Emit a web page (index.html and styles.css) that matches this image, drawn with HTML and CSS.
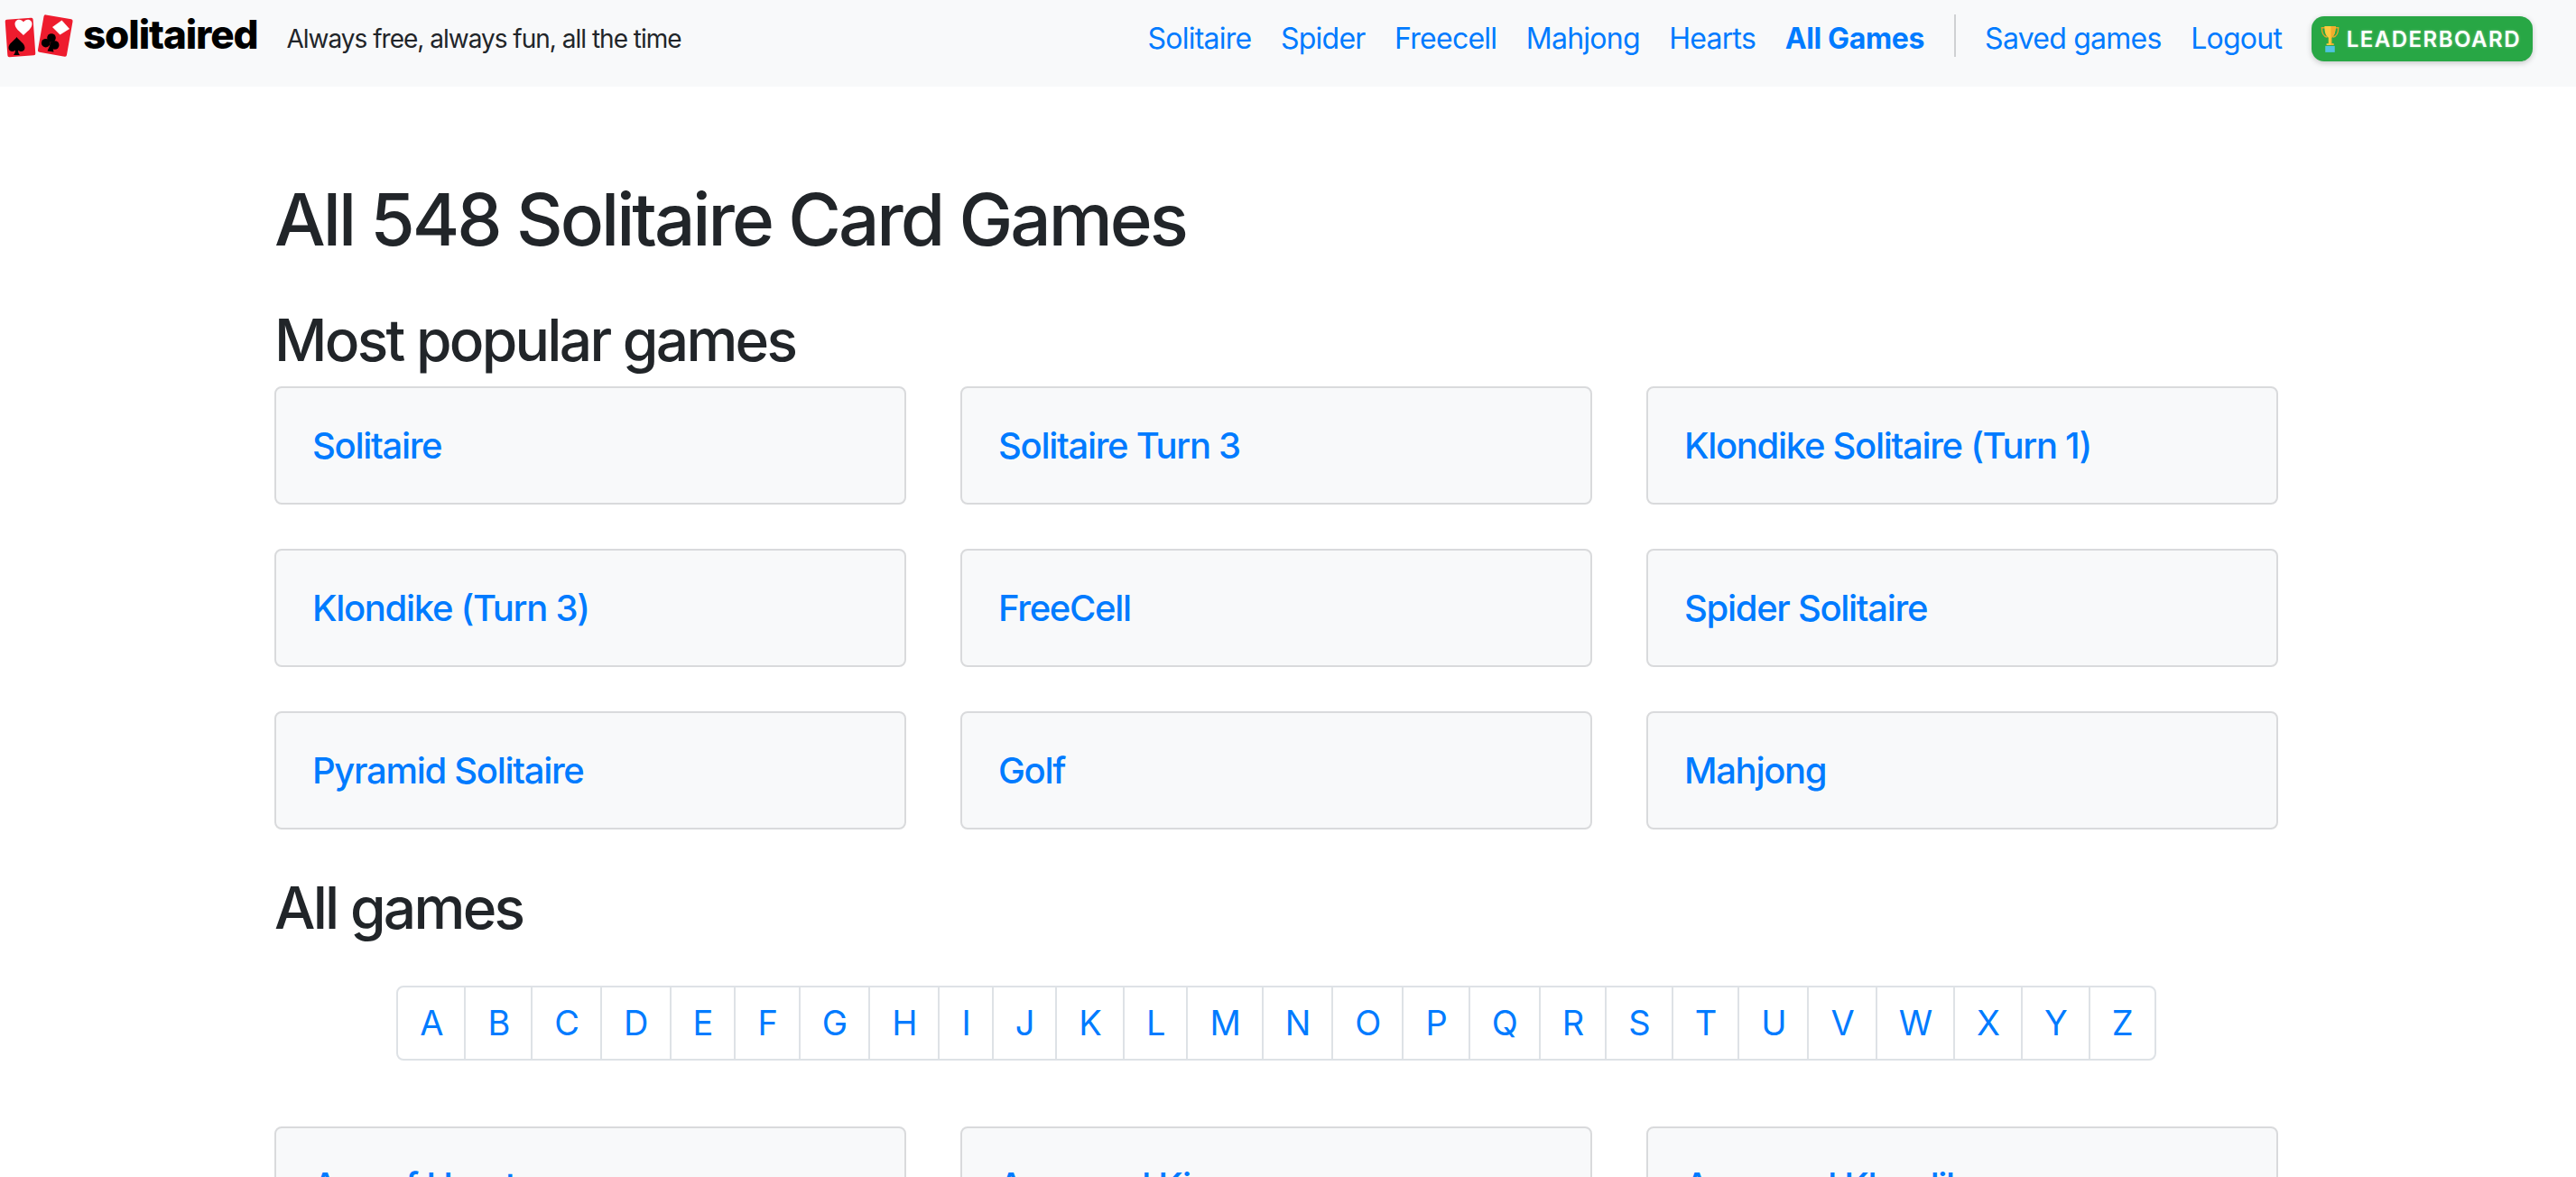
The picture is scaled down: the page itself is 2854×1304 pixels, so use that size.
FILE: index.html
```html
<!DOCTYPE html>
<html>
<head>
    <title>All Solitaire Card Games</title>
    <link rel="stylesheet" href="styles.css">
</head>
<body>
    <nav class="navbar">
        <a class="brand" href="#">
            <svg class="brand-cards" viewBox="0 0 84 96" width="84" height="96">
                <rect x="7" y="20.700" width="31" height="41.600" rx="2" fill="#ee1c2e" transform="rotate(-4 22.500 41.500)"/>
                <path d="M26 39C22 35 16.500 31.500 16.500 26.500 16.500 21 23.500 20 26 24.500 28.500 20 35.500 21 35.500 26.500 35.500 31.500 30 35 26 39Z" fill="#fff"/>
                <path d="M18.500 41C21 45 27.500 48 27.500 53 27.500 57.500 22 58 20 55.500 20 58 20.800 60 22 61H15C16.200 60 17 58 17 55.500 15 58 9.500 57.500 9.500 53 9.500 48 16 45 18.500 41Z" fill="#000"/>
                <rect x="45" y="18.500" width="32.500" height="42" rx="2" fill="#ee1c2e" transform="rotate(10 61 39.500)"/>
                <path d="M68.500 22.500L77 32 66.500 38.500 58 30Z" fill="#fff"/>
                <circle cx="57" cy="42" r="4.800" fill="#000"/>
                <circle cx="50.700" cy="47.700" r="4.800" fill="#000"/>
                <circle cx="60.700" cy="50" r="4.800" fill="#000"/>
                <path d="M56 44L58 51 59.500 57.500 52.500 56.500 55 51Z" fill="#000"/>
            </svg>
            <span class="brand-name">solitaired</span>
        </a>
        <span class="tagline">Always free, always fun, all the time</span>
        <div class="nav-links">
            <a href="#">Solitaire</a>
            <a href="#">Spider</a>
            <a href="#">Freecell</a>
            <a href="#">Mahjong</a>
            <a href="#">Hearts</a>
            <a href="#" class="active">All Games</a>
            <span class="nav-sep"></span>
            <a href="#">Saved games</a>
            <a href="#">Logout</a>
            <a href="#" class="leaderboard">
                <svg viewBox="0 0 24 34" width="21" height="30">
                    <path d="M6 3H1.500c0 7 2 11 7 12M18 3h4.500c0 7-2 11-7 12" fill="none" stroke="#e0a526" stroke-width="1.600"/>
                    <path d="M5 1h14c0 8-1.500 12-5 14.500V23h2.500v2h-9v-2H10v-7.500C6.500 13 5 9 5 1z" fill="#fdcb3f"/>
                    <path d="M13 1h6c0 8-1.500 12-5 14.500V23h2.500v2H13z" fill="#f2ac2c"/>
                    <rect x="6" y="26" width="12" height="8" fill="#4fc3e0"/>
                </svg>
                LEADERBOARD
            </a>
        </div>
    </nav>

    <main class="content">
        <h1>All 548 Solitaire Card Games</h1>

        <h2>Most popular games</h2>
        <div class="game-grid">
            <a class="game-card" href="#">Solitaire</a>
            <a class="game-card" href="#">Solitaire Turn 3</a>
            <a class="game-card" href="#">Klondike Solitaire (Turn 1)</a>
            <a class="game-card" href="#">Klondike (Turn 3)</a>
            <a class="game-card" href="#">FreeCell</a>
            <a class="game-card" href="#">Spider Solitaire</a>
            <a class="game-card" href="#">Pyramid Solitaire</a>
            <a class="game-card" href="#">Golf</a>
            <a class="game-card" href="#">Mahjong</a>
        </div>

        <h2 class="all-games">All games</h2>
        <div class="letters">
            <a href="#">A</a><a href="#">B</a><a href="#">C</a><a href="#">D</a><a href="#">E</a><a href="#">F</a><a href="#">G</a><a href="#">H</a><a href="#">I</a><a href="#">J</a><a href="#">K</a><a href="#">L</a><a href="#">M</a><a href="#">N</a><a href="#">O</a><a href="#">P</a><a href="#">Q</a><a href="#">R</a><a href="#">S</a><a href="#">T</a><a href="#">U</a><a href="#">V</a><a href="#">W</a><a href="#">X</a><a href="#">Y</a><a href="#">Z</a>
        </div>

        <div class="game-grid">
            <a class="game-card" href="#">Ace of Hearts</a>
            <a class="game-card" href="#">Aces and Kings</a>
            <a class="game-card" href="#">Aces and Klondike</a>
        </div>
    </main>
</body>
</html>
```

FILE: styles.css
```css
html, body {
    height: 1304px;
    overflow: hidden;
}

body {
    margin: 0;
    background: #fff;
    color: #212529;
    font-family: "Inter", "Liberation Sans", sans-serif;
}

a {
    color: #007bff;
    text-decoration: none;
}

/* Top bar */
.navbar {
    display: flex;
    align-items: center;
    height: 96px;
    background: #f8f9fa;
    padding: 0 48px 0 0;
}

.brand {
    display: flex;
    align-items: center;
    color: #000;
}

.brand-cards {
    display: block;
}

.brand-name {
    margin-left: 8px;
    margin-top: -20px;
    font-size: 44px;
    font-weight: 800;
    letter-spacing: -1.100px;
}

.tagline {
    margin-left: 32px;
    font-size: 28px;
    letter-spacing: -1px;
    margin-top: -10px;
}

.nav-links {
    display: flex;
    align-items: center;
    gap: 32.500px;
    margin-left: auto;
    margin-top: -12px;
    font-size: 32px;
    letter-spacing: -0.750px;
}

.nav-links .active {
    font-weight: 700;
    letter-spacing: -0.350px;
}

.nav-sep {
    width: 2px;
    height: 47px;
    margin-top: -5px;
    background: #cfd1d3;
}

.leaderboard {
    display: flex;
    align-items: center;
    gap: 8px;
    height: 50px;
    margin-top: 2px;
    padding: 0 13px 0 10px;
    border-radius: 14px;
    background: #28a745;
    box-shadow: 0 2px 6px rgba(0, 0, 0, 0.2);
    color: #fff;
    font-size: 24px;
    font-weight: 600;
    letter-spacing: 1.500px;
    text-shadow: 0 0 3px rgba(255, 255, 255, 0.4);
}

/* Page body */
.content {
    width: 2220px;
    margin-left: 304px;
}

h1 {
    margin: 0;
    padding-top: 99px;
    font-size: 80px;
    font-weight: 500;
    letter-spacing: -3px;
    line-height: 96px;
}

h2 {
    margin: 47px 0 13px;
    font-size: 64px;
    font-weight: 500;
    letter-spacing: -2.700px;
    line-height: 77px;
}

.game-grid {
    display: grid;
    grid-template-columns: repeat(3, 700px);
    column-gap: 60px;
    row-gap: 49px;
}

.game-card {
    display: flex;
    align-items: center;
    box-sizing: border-box;
    height: 131px;
    padding: 0 40px;
    background: #f8f9fa;
    border: 2px solid #d9dadc;
    border-radius: 8px;
    font-size: 40px;
    font-weight: 500;
    letter-spacing: -1.300px;
}

.all-games {
    margin-top: 48px;
}

.letters {
    display: flex;
    justify-content: center;
    width: max-content;
    margin: 48px auto 73px;
    border: 2px solid #dee2e6;
    border-radius: 8px;
    font-size: 38px;
    letter-spacing: -1px;
}

.letters a {
    padding: 0 24px;
    line-height: 79px;
    border-left: 2px solid #dee2e6;
}

.letters a:first-child {
    border-left: 0;
}
```
